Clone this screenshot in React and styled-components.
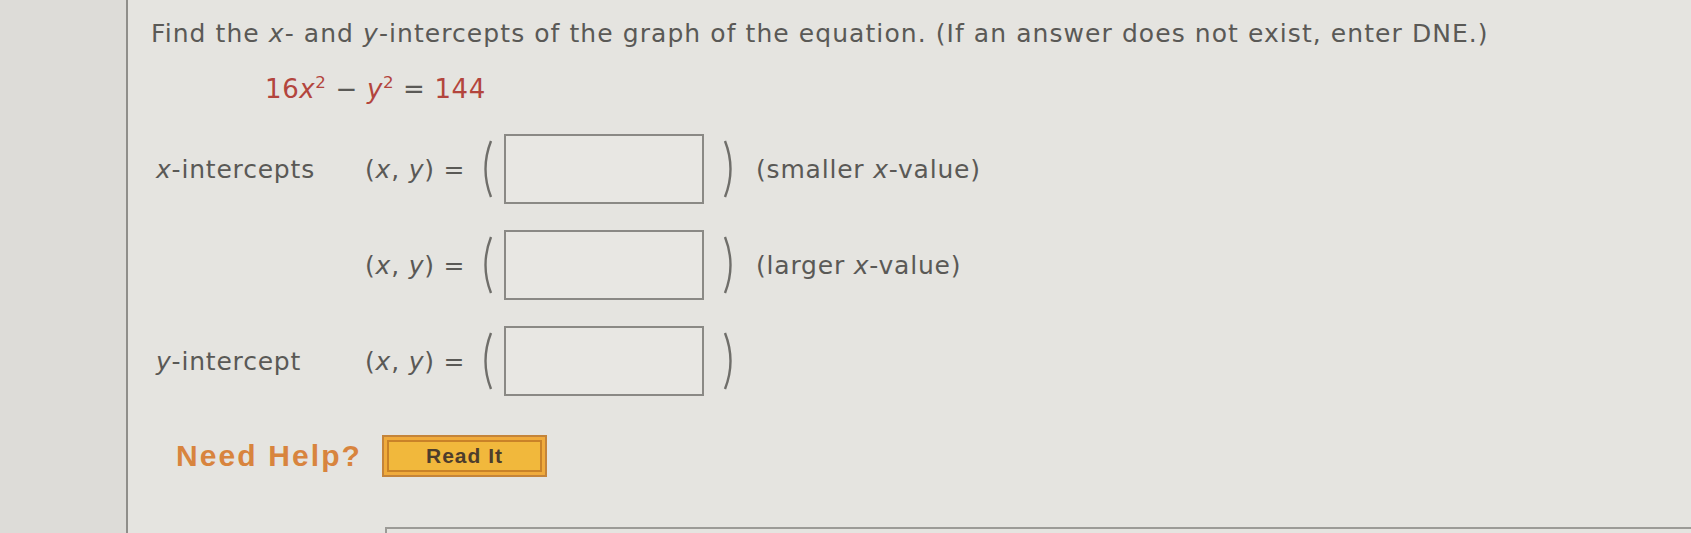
import React from "react";
import styled, { createGlobalStyle } from "styled-components";

const GlobalStyle = createGlobalStyle`
  html, body {
    margin: 0;
    padding: 0;
    overflow: hidden;
    background: #e5e4e0;
  }
`;

const Page = styled.div`
  display: flex;
  width: 1691px;
  height: 533px;
  background: #e5e4e0;
  font-family: "DejaVu Sans", Verdana, sans-serif;
  color: #5a5956;
`;

const Sidebar = styled.div`
  width: 126px;
  flex-shrink: 0;
  background: #dddcd8;
  border-right: 2px solid #8f8e8a;
`;

const Main = styled.div`
  flex: 1;
  padding: 19px 0 0 23px;
  display: flex;
  flex-direction: column;
`;

const Title = styled.div`
  font-size: 25px;
  line-height: 30px;
  letter-spacing: 1.07px;
  white-space: nowrap;
`;

const Equation = styled.div`
  margin: 24px 0 0 114px;
  font-size: 26px;
  line-height: 32px;
  letter-spacing: 0.6px;
  color: #b3453d;
`;

const Sup = styled.sup`
  font-size: 0.64em;
  line-height: 0;
  vertical-align: 0.6em;
`;

const Op = styled.span`
  color: #5a5956;
  margin: 0 9px;
`;

const Rows = styled.div`
  margin-top: 29px;
  display: flex;
  flex-direction: column;
  gap: 26px;
`;

const Row = styled.div`
  display: flex;
  align-items: center;
  height: 70px;
  font-size: 25px;
  letter-spacing: 0.8px;
`;

const Label = styled.div`
  width: 209px;
  padding-left: 5px;
  flex-shrink: 0;
  white-space: nowrap;
`;

const Pair = styled.div`
  width: 115px;
  flex-shrink: 0;
  white-space: nowrap;
`;

const Paren = styled.svg`
  width: 13px;
  height: 60px;
  flex-shrink: 0;
  margin: ${(p) => (p.$right ? "0 20px 0 19px" : "0 11px 0 0")};
`;

const AnswerBox = styled.div`
  width: 196px;
  height: 66px;
  border: 2px solid #8a8985;
  background: #e8e7e3;
  flex-shrink: 0;
`;

const Note = styled.div`
  white-space: nowrap;
`;

const HelpRow = styled.div`
  margin: 39px 0 0 25px;
  display: flex;
  align-items: center;
  gap: 20px;
`;

const HelpText = styled.div`
  font-family: "Liberation Sans", Arial, sans-serif;
  font-weight: bold;
  font-size: 30px;
  letter-spacing: 2.1px;
  color: #d8843e;
`;

const ReadButton = styled.div`
  width: 165px;
  height: 42px;
  box-sizing: border-box;
  border: 2px solid #c4843a;
  background: #f0ab3c;
  padding: 3px;
  display: flex;
`;

const ReadInner = styled.div`
  flex: 1;
  border: 2px solid #c98228;
  background: #f1b83c;
  display: flex;
  align-items: center;
  justify-content: center;
  font-family: "Liberation Sans", Arial, sans-serif;
  font-weight: bold;
  font-size: 21px;
  letter-spacing: 1px;
  color: #4d3d2c;
`;

const LowerBox = styled.div`
  margin: 50px 0 0 234px;
  height: 40px;
  border-top: 2px solid #9c9b97;
  border-left: 2px solid #9c9b97;
`;

const V = styled.i`
  font-style: italic;
`;

const LeftParen = () => (
  <Paren viewBox="0 0 13 60">
    <path d="M11 2 Q0 30 11 58" fill="none" stroke="#6f6e6a" strokeWidth="2.4" />
  </Paren>
);

const RightParen = () => (
  <Paren viewBox="0 0 13 60" $right>
    <path d="M2 2 Q13 30 2 58" fill="none" stroke="#6f6e6a" strokeWidth="2.4" />
  </Paren>
);

const AnswerRow = ({ label, note }) => (
  <Row>
    <Label>{label}</Label>
    <Pair>
      (<V>x</V>, <V>y</V>) =
    </Pair>
    <LeftParen />
    <AnswerBox />
    <RightParen />
    <Note>{note}</Note>
  </Row>
);

export default function App() {
  return (
    <>
      <GlobalStyle />
      <Page>
        <Sidebar />
        <Main>
          <Title>
            Find the <V>x</V>- and <V>y</V>-intercepts of the graph of the equation. (If an answer does not exist, enter DNE.)
          </Title>
          <Equation>
            16<V>x</V>
            <Sup>2</Sup>
            <Op>−</Op>
            <V>y</V>
            <Sup>2</Sup>
            <Op>=</Op>144
          </Equation>
          <Rows>
            <AnswerRow
              label={<><V>x</V>-intercepts</>}
              note={<>(smaller <V>x</V>-value)</>}
            />
            <AnswerRow label="" note={<>(larger <V>x</V>-value)</>} />
            <AnswerRow label={<><V>y</V>-intercept</>} note="" />
          </Rows>
          <HelpRow>
            <HelpText>Need Help?</HelpText>
            <ReadButton>
              <ReadInner>Read It</ReadInner>
            </ReadButton>
          </HelpRow>
          <LowerBox />
        </Main>
      </Page>
    </>
  );
}
